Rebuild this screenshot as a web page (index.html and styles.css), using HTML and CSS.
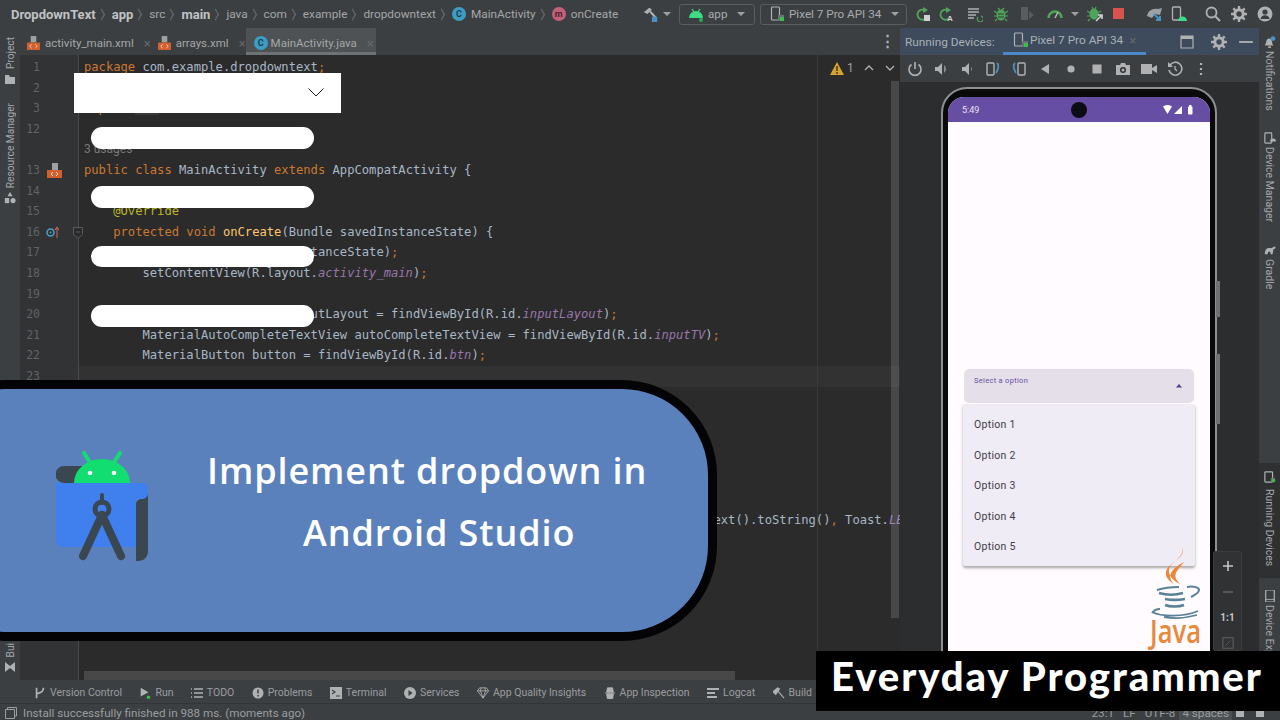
FILE: index.html
```html
<!DOCTYPE html>
<html lang="en">
<head>
  <meta charset="UTF-8" />
  <title>Implement dropdown in Android Studio</title>
  <link rel="stylesheet" href="styles.css">
</head>
<body>
  <div class="ide">
    <header class="nav-bar">
      <div class="crumbs">
        <b>DropdownText</b><i></i><b>app</b><i></i><span>src</span><i></i><b>main</b><i></i><span>java</span><i></i><span>com</span><i></i><span>example</span><i></i><span>dropdowntext</span><i></i>
        <em class="badge badge-class">C</em><span>MainActivity</span><i></i>
        <em class="badge badge-method">m</em><span>onCreate</span>
      </div>
      <div class="run-bar">
        <svg class="ico" viewBox="0 0 18 18"><path d="M1 7l6-5 3 2-5 5z" fill="#afb1b3"/><path d="M8 6l6 7" stroke="#afb1b3" stroke-width="2.4"/><rect x="10" y="12" width="6" height="6" fill="#4a90c2"/></svg>
        <span class="caret"></span>
        <div class="combo combo-app">
          <svg class="ico" viewBox="0 0 16 16"><path d="M1 12a7 7 0 0 1 14 0z" fill="#3ddc84"/><path d="M4 3l2 3M12 3l-2 3" stroke="#3ddc84" stroke-width="1.2"/><circle cx="13" cy="14" r="2" fill="#22b14c"/></svg>
          <span>app</span><span class="caret"></span>
        </div>
        <div class="combo combo-device">
          <svg class="ico" viewBox="0 0 16 16"><rect x="2.5" y="1" width="8" height="13" rx="1" fill="none" stroke="#afb1b3" stroke-width="1.2"/><rect x="9" y="9" width="6" height="6" fill="#6e7173"/><rect x="11" y="11" width="4" height="4" fill="#3bbf4a"/></svg>
          <span>Pixel 7 Pro API 34</span><span class="caret"></span>
        </div>
        <div class="run-group run-first">
          <svg class="ico" viewBox="0 0 16 16"><path d="M11 5a5 5 0 1 0-1 8" fill="none" stroke="#4fa35a" stroke-width="2"/><path d="M8 1l5 3-5 3z" fill="#4fa35a"/><rect x="9" y="9" width="6" height="6" fill="#cfd1d3"/></svg>
          <svg class="ico" viewBox="0 0 16 16"><path d="M11 5a5 5 0 1 0-1 8" fill="none" stroke="#4fa35a" stroke-width="2"/><path d="M8 1l5 3-5 3z" fill="#4fa35a"/><text x="9" y="15" class="ico-letter">A</text></svg>
        </div>
        <div class="run-group run-second">
          <svg class="ico" viewBox="0 0 16 16"><path d="M1 3h11M1 6h11M1 9h8M1 12h6" stroke="#afb1b3" stroke-width="1.6"/><path d="M11 11a3 3 0 1 0 3-1" fill="none" stroke="#4fa35a" stroke-width="1.2"/></svg>
          <svg class="ico" viewBox="0 0 16 16"><ellipse cx="8" cy="9" rx="4.5" ry="5.5" fill="#4fa35a"/><path d="M1 5l3 2M15 5l-3 2M1 10h3M15 10h-3M2 15l2-2M14 15l-2-2M5 2l2 2M11 2L9 4" stroke="#4fa35a" stroke-width="1.2"/><path d="M5 8h6M5 11h6" stroke="#2f3a30"/></svg>
          <svg class="ico" viewBox="0 0 16 16"><rect x="2" y="1" width="7" height="13" rx="1" fill="#5a5d5f"/><path d="M10 5l5 4-5 4z" fill="#5a5d5f"/></svg>
        </div>
        <div class="run-group run-third">
          <svg class="ico" viewBox="0 0 16 16"><path d="M1.5 12a6.5 6.5 0 0 1 13 0" fill="none" stroke="#4fa35a" stroke-width="2.6"/><path d="M8 12l3-6" stroke="#afb1b3" stroke-width="1.6"/></svg>
          <span class="caret"></span>
          <svg class="ico" viewBox="0 0 16 16"><ellipse cx="7" cy="8" rx="4.5" ry="5.5" fill="#4fa35a"/><path d="M0 5l3 2M14 5l-3 2M0 10h3M1 15l2-2M5 1l1 2M9 1L8 3" stroke="#4fa35a" stroke-width="1.2"/><path d="M9 15l6-6M11 9h4v4" stroke="#cfd1d3" stroke-width="1.6" fill="none"/></svg>
          <svg class="ico" viewBox="0 0 16 16"><rect x="2" y="2" width="11" height="11" fill="#d9534f"/></svg>
        </div>
        <div class="run-group run-fourth">
          <svg class="ico" viewBox="0 0 16 16"><path d="M0 10c1-5 5-8 11-7l4-1-2 7-5-1-3 4z" fill="#9ea1a3"/><path d="M7 8l6 6M9 14h4v-4" stroke="#4a90c2" stroke-width="2" fill="none"/></svg>
          <svg class="ico" viewBox="0 0 16 16"><rect x="1.5" y="1" width="8" height="13" rx="1" fill="none" stroke="#afb1b3" stroke-width="1.3"/><path d="M7 15a4.5 4.5 0 0 1 9 0z" fill="#3ddc84"/></svg>
        </div>
        <div class="run-group run-fifth">
          <svg class="ico" viewBox="0 0 16 16"><circle cx="6.5" cy="6.5" r="5" fill="none" stroke="#afb1b3" stroke-width="1.8"/><path d="M10 10l5 5" stroke="#afb1b3" stroke-width="2"/></svg>
          <svg class="ico" viewBox="0 0 16 16"><circle cx="8" cy="8" r="4.2" fill="none" stroke="#afb1b3" stroke-width="3"/><path d="M8 0v3M8 13v3M0 8h3M13 8h3M2.3 2.3l2 2M11.7 11.7l2 2M2.3 13.7l2-2M11.7 4.3l2-2" stroke="#afb1b3" stroke-width="2.4"/></svg>
          <svg class="ico" viewBox="0 0 16 16"><circle cx="8" cy="8" r="7.5" fill="#afb1b3"/><circle cx="8" cy="6" r="2.6" fill="#3c3f41"/><path d="M3.5 13a4.6 4.6 0 0 1 9 0z" fill="#3c3f41"/></svg>
        </div>
      </div>
    </header>

    <div class="workspace">
      <aside class="side-strip side-left">
        <div class="side-group">
          <div class="side-item"><span>Project</span><svg class="side-ico" viewBox="0 0 12 12"><path d="M1 2h4l1 2h5v7H1z" fill="#afb1b3"/></svg></div>
          <div class="side-item"><span>Resource Manager</span><svg class="side-ico" viewBox="0 0 14 14"><path d="M7 0l3 5H4z" fill="#afb1b3"/><rect x="1" y="7" width="5" height="6" fill="#afb1b3"/><circle cx="10.5" cy="10" r="3" fill="#afb1b3"/></svg></div>
        </div>
        <div class="side-item"><span>Bui</span><svg class="side-ico" viewBox="0 0 12 12"><path d="M1 1l5 4 5-4v10L6 7l-5 4z" fill="#afb1b3"/></svg></div>
      </aside>

      <section class="editor-col">
        <div class="tabs">
          <div class="tab">
            <svg class="file-ico" viewBox="0 0 14 15"><path d="M4 0h6v7H4z" fill="#9ea1a3"/><rect y="7" width="14" height="8" fill="#d35f2c"/><path d="M5 9l-2 2 2 2M9 9l2 2-2 2" fill="none" stroke="#f3d9cc"/></svg>
            <span>activity_main.xml</span><span class="tab-x">×</span>
          </div>
          <div class="tab">
            <svg class="file-ico" viewBox="0 0 14 15"><path d="M4 0h6v7H4z" fill="#9ea1a3"/><rect y="7" width="14" height="8" fill="#d35f2c"/><path d="M5 9l-2 2 2 2M9 9l2 2-2 2" fill="none" stroke="#f3d9cc"/></svg>
            <span>arrays.xml</span><span class="tab-x">×</span>
          </div>
          <div class="tab tab-active">
            <em class="badge badge-class">C</em>
            <span>MainActivity.java</span><span class="tab-x">×</span>
          </div>
          <div class="tabs-more">⋮</div>
        </div>
        <div class="editor">
          <div class="line"><span class="num">1</span><span class="mark"></span><code><u>package</u> com.example.dropdowntext<u>;</u></code></div>
          <div class="line"><span class="num">2</span><span class="mark"></span><code></code></div>
          <div class="line"><span class="num">3</span><span class="mark"></span><code><u>import</u> <s>...</s></code></div>
          <div class="line"><span class="num">12</span><span class="mark"></span><code></code></div>
          <div class="line"><span class="num"></span><span class="mark"></span><code class="usages">3 usages</code></div>
          <div class="line"><span class="num">13</span><span class="mark"><svg class="mark-xml" viewBox="0 0 15 15"><path d="M5 0h6v7H5z" fill="#9ea1a3"/><rect y="7" width="15" height="8" fill="#d35f2c"/><path d="M6 9l-2 2 2 2M9 9l2 2-2 2" fill="none" stroke="#f3d9cc"/></svg></span><code><u>public class</u> MainActivity <u>extends</u> AppCompatActivity {</code></div>
          <div class="line"><span class="num">14</span><span class="mark"></span><code></code></div>
          <div class="line"><span class="num">15</span><span class="mark"></span><code>    <tt>@Override</tt></code></div>
          <div class="line"><span class="num">16</span><span class="mark"><svg class="mark-override" viewBox="0 0 13 12"><circle cx="4.5" cy="6.5" r="3.5" fill="none" stroke="#4a9cc7" stroke-width="1.6"/><circle cx="4.5" cy="6.5" r="1" fill="#4a9cc7"/><path d="M11 12V2M9 4l2-3 2 3" stroke="#d9694f" fill="none"/></svg><svg class="mark-fold" viewBox="0 0 10 12"><path d="M.5.5h9v7l-4.5 4-4.5-4zM3 5h4" fill="#2b2b2b" stroke="#5a5a5a"/></svg></span><code>    <u>protected void</u> <q>onCreate</q>(Bundle savedInstanceState) {</code></div>
          <div class="line"><span class="num">17</span><span class="mark"></span><code>        <u>super</u>.onCreate(savedInstanceState)<u>;</u></code></div>
          <div class="line"><span class="num">18</span><span class="mark"></span><code>        setContentView(R.layout.<var>activity_main</var>)<u>;</u></code></div>
          <div class="line"><span class="num">19</span><span class="mark"></span><code></code></div>
          <div class="line"><span class="num">20</span><span class="mark"></span><code>        TextInputLayout textInputLayout = findViewById(R.id.<var>inputLayout</var>)<u>;</u></code></div>
          <div class="line"><span class="num">21</span><span class="mark"></span><code>        MaterialAutoCompleteTextView autoCompleteTextView = findViewById(R.id.<var>inputTV</var>)<u>;</u></code></div>
          <div class="line"><span class="num">22</span><span class="mark"></span><code>        MaterialButton button = findViewById(R.id.<var>btn</var>)<u>;</u></code></div>
          <div class="line line-current"><span class="num">23</span><span class="mark"></span><code></code></div>
          <div class="line"><span class="num"></span><span class="mark"></span><code></code></div>
          <div class="line"><span class="num"></span><span class="mark"></span><code></code></div>
          <div class="line"><span class="num"></span><span class="mark"></span><code></code></div>
          <div class="line"><span class="num"></span><span class="mark"></span><code></code></div>
          <div class="line"><span class="num"></span><span class="mark"></span><code></code></div>
          <div class="line"><span class="num"></span><span class="mark"></span><code></code></div>
          <div class="line"><span class="num"></span><span class="mark"></span><code class="toast-line">ext().toString()<u>,</u> Toast.<var>LE</var></code></div>

          <div class="margin-line"></div>
          <div class="inspection">
            <svg class="inspection-ico" viewBox="0 0 14 13"><path d="M7 0l7 13H0z" fill="#d6a32e"/><path d="M7 4v5M7 10v2" stroke="#3a2f10" stroke-width="1.4"/></svg>
            <span>1</span>
            <svg class="inspection-arrow" viewBox="0 0 10 6"><path d="M1 5l4-4 4 4" fill="none" stroke="#afb1b3" stroke-width="1.3"/></svg>
            <svg class="inspection-arrow" viewBox="0 0 10 6"><path d="M1 1l4 4 4-4" fill="none" stroke="#afb1b3" stroke-width="1.3"/></svg>
          </div>
          <div class="scroll-v"></div>
          <div class="scroll-h"></div>
        </div>
      </section>

      <section class="device-panel">
        <div class="device-head">
          <span class="device-label">Running Devices:</span>
          <div class="device-tab">
            <svg class="ico" viewBox="0 0 16 16"><rect x="1.5" y="1" width="8" height="13" rx="1" fill="none" stroke="#afb1b3" stroke-width="1.2"/><rect x="9" y="9" width="6" height="6" fill="#6e7173"/><rect x="11" y="11" width="4" height="4" fill="#3bbf4a"/></svg>
            <span>Pixel 7 Pro API 34</span><span class="tab-x">×</span>
          </div>
          <svg class="ico head-window" viewBox="0 0 14 14"><path d="M1 1h12v12H1z" fill="none" stroke="#afb1b3" stroke-width="1.2"/><rect x="1" y="1" width="12" height="3" fill="#afb1b3"/></svg>
          <svg class="ico head-gear" viewBox="0 0 16 16"><circle cx="8" cy="8" r="4.2" fill="none" stroke="#afb1b3" stroke-width="3"/><path d="M8 0v3M8 13v3M0 8h3M13 8h3M2.3 2.3l2 2M11.7 11.7l2 2M2.3 13.7l2-2M11.7 4.3l2-2" stroke="#afb1b3" stroke-width="2.4"/></svg>
          <svg class="ico head-min" viewBox="0 0 14 14"><path d="M1 7h12" stroke="#afb1b3" stroke-width="1.6"/></svg>
        </div>
        <div class="device-tools">
          <svg class="ico" viewBox="0 0 16 16"><path d="M4.5 3.5a6 6 0 1 0 7 0" fill="none" stroke="#afb1b3" stroke-width="1.6"/><path d="M8 1v7" stroke="#afb1b3" stroke-width="1.6"/></svg>
          <svg class="ico" viewBox="0 0 16 16"><path d="M2 6h3l4-4v12l-4-4H2z" fill="#afb1b3"/><path d="M11 4a5 5 0 0 1 0 8" fill="#8a8d8f"/></svg>
          <svg class="ico" viewBox="0 0 16 16"><path d="M3 6h3l4-4v12l-4-4H3z" fill="#afb1b3"/><path d="M12 6a2.5 2.5 0 0 1 0 4" fill="#8a8d8f"/></svg>
          <svg class="ico" viewBox="0 0 16 16"><rect x="2" y="2" width="7" height="12" rx="1" fill="none" stroke="#afb1b3" stroke-width="1.4"/><path d="M12 2c2 2 2 5-1 10" fill="none" stroke="#4a90c2" stroke-width="1.8"/></svg>
          <svg class="ico" viewBox="0 0 16 16"><rect x="7" y="2" width="7" height="12" rx="1" fill="none" stroke="#afb1b3" stroke-width="1.4"/><path d="M4 2C2 4 2 7 5 12" fill="none" stroke="#4a90c2" stroke-width="1.8"/></svg>
          <svg class="ico" viewBox="0 0 16 16"><path d="M12 3v10L4 8z" fill="#afb1b3"/></svg>
          <svg class="ico" viewBox="0 0 16 16"><circle cx="8" cy="8" r="3.6" fill="#afb1b3"/></svg>
          <svg class="ico" viewBox="0 0 16 16"><rect x="3.5" y="3.5" width="9" height="9" fill="#afb1b3"/></svg>
          <svg class="ico" viewBox="0 0 16 16"><path d="M1 4h4l1-2h4l1 2h4v10H1z" fill="#afb1b3"/><circle cx="8" cy="9" r="3" fill="#2e3031"/><circle cx="8" cy="9" r="1.5" fill="#afb1b3"/></svg>
          <svg class="ico" viewBox="0 0 16 16"><rect x="0" y="3" width="11" height="10" fill="#afb1b3"/><path d="M11 7l5-3v8l-5-3z" fill="#afb1b3"/></svg>
          <svg class="ico" viewBox="0 0 16 16"><path d="M3 4a6.5 6.5 0 1 1-1 5" fill="none" stroke="#afb1b3" stroke-width="1.6"/><path d="M1 1v5h5z" fill="#afb1b3"/><path d="M8 5v3l2 2" fill="none" stroke="#afb1b3" stroke-width="1.3"/></svg>
          <svg class="ico" viewBox="0 0 16 16"><path d="M8 2v2M8 7v2M8 12v2" stroke="#afb1b3" stroke-width="2.2"/></svg>
        </div>
        <div class="device-view">
          <div class="phone">
            <div class="phone-btn phone-btn-power"></div>
            <div class="phone-btn phone-btn-volume"></div>
            <div class="screen">
              <div class="status-bar">
                <span>5:49</span>
                <i class="camera"></i>
                <svg class="status-icons" viewBox="0 0 30 10"><path d="M0 1.5a8 8 0 0 1 9 0L4.5 9z" fill="#fff"/><path d="M19 1v8h-8z" fill="#fff"/><rect x="25" y="1.5" width="4.5" height="8" rx="1" fill="#fff"/><rect x="26" y="0" width="2.5" height="2" fill="#fff"/></svg>
              </div>
              <div class="screen-body">
                <div class="field">
                  <span class="field-label">Select a option</span>
                  <svg class="field-arrow" viewBox="0 0 6 4"><path d="M3 0l3 3.5H0z" fill="#4f3f86"/></svg>
                </div>
                <ul class="menu">
                  <li>Option 1</li>
                  <li>Option 2</li>
                  <li>Option 3</li>
                  <li>Option 4</li>
                  <li>Option 5</li>
                </ul>
              </div>
            </div>
          </div>
          <div class="zoom-panel">
            <svg class="zoom-ico" viewBox="0 0 12 12"><path d="M6 1v10M1 6h10" stroke="#c4c6c8" stroke-width="1.6"/></svg>
            <svg class="zoom-ico" viewBox="0 0 12 12"><path d="M1 6h10" stroke="#5f6264" stroke-width="1.6"/></svg>
            <span>1:1</span>
            <svg class="zoom-ico" viewBox="0 0 14 14"><path d="M1 1h12v12H1z" fill="none" stroke="#5f6264" stroke-width="1.2"/><path d="M4 10l6-6" stroke="#5f6264"/></svg>
          </div>
        </div>
      </section>

      <aside class="side-strip side-right">
        <div class="rail-item"><svg class="side-ico" viewBox="0 0 14 14"><path d="M1 11c2-2 1-8 5-8s3 6 5 8z" fill="#afb1b3"/><circle cx="10.5" cy="3" r="2.8" fill="#4a90c2"/><rect x="5" y="12" width="3" height="2" fill="#afb1b3"/></svg><span>Notifications</span></div>
        <div class="rail-item rail-manager"><svg class="side-ico" viewBox="0 0 14 14"><rect x="1" y="1" width="8" height="12" rx="1" fill="none" stroke="#afb1b3" stroke-width="1.4"/><path d="M7 11a3.5 3.5 0 0 1 7 0z" fill="#afb1b3"/></svg><span>Device Manager</span></div>
        <div class="rail-item rail-gradle"><svg class="side-ico" viewBox="0 0 14 14"><path d="M1 12c0-6 3-8 7-7 2 0 3-2 5-2 1 1 0 3-2 3l-1 6H8l-1-3H5l-1 3z" fill="#afb1b3"/></svg><span>Gradle</span></div>
        <div class="rail-item rail-running"><svg class="side-ico" viewBox="0 0 14 14"><rect x="1" y="1" width="9" height="12" rx="1" fill="none" stroke="#afb1b3" stroke-width="1.4"/><rect x="8" y="8" width="5" height="5" fill="#6e7173"/><circle cx="11" cy="11" r="2" fill="#3bbf4a"/></svg><span>Running Devices</span></div>
        <div class="rail-item rail-explorer"><svg class="side-ico" viewBox="0 0 14 14"><rect x="2" y="0" width="10" height="14" rx="1" fill="none" stroke="#afb1b3" stroke-width="1.4"/><path d="M2 11h10" stroke="#afb1b3"/></svg><span>Device Expl</span></div>
      </aside>
    </div>

    <div class="tool-bar">
      <div class="tool"><svg class="tool-ico" viewBox="0 0 12 14"><path d="M2 1v12M10 1c0 5-3 5-8 7" fill="none" stroke="#afb1b3" stroke-width="2"/></svg>Version Control</div>
      <div class="tool"><svg class="tool-ico" viewBox="0 0 12 14"><path d="M1 1l9 5-9 5z" fill="#afb1b3"/><circle cx="10" cy="12" r="2" fill="#3bbf4a"/></svg>Run</div>
      <div class="tool"><svg class="tool-ico" viewBox="0 0 12 12"><path d="M0 2h1M3 2h9M0 6h1M3 6h9M0 10h1M3 10h9" stroke="#afb1b3" stroke-width="1.5"/></svg>TODO</div>
      <div class="tool"><svg class="tool-ico" viewBox="0 0 12 12"><circle cx="6" cy="6" r="5.5" fill="#afb1b3"/><path d="M6 2.5v4M6 8v1.5" stroke="#3c3f41" stroke-width="1.5"/></svg>Problems</div>
      <div class="tool"><svg class="tool-ico" viewBox="0 0 12 12"><rect width="12" height="12" fill="#afb1b3"/><path d="M2 3l3 2-3 2M6 9h4" stroke="#3c3f41" fill="none" stroke-width="1.2"/></svg>Terminal</div>
      <div class="tool"><svg class="tool-ico" viewBox="0 0 12 12"><circle cx="6" cy="6" r="6" fill="#afb1b3"/><path d="M4.5 3l4 3-4 3z" fill="#3c3f41"/></svg>Services</div>
      <div class="tool"><svg class="tool-ico" viewBox="0 0 14 13"><path d="M3 .5h8L13.5 4 7 12.5.5 4zM.5 4h13M5 .5L4 4l3 8.5L10 4 9 .5" fill="none" stroke="#afb1b3"/></svg>App Quality Insights</div>
      <div class="tool"><svg class="tool-ico" viewBox="0 0 12 14"><path d="M3 1h6l1 5H2zM0 7h12M2 8h8l-1 6H3z" stroke="#afb1b3" fill="#afb1b3"/></svg>App Inspection</div>
      <div class="tool"><svg class="tool-ico" viewBox="0 0 12 10"><path d="M0 1h12M0 5h8M0 9h10" stroke="#afb1b3" stroke-width="1.8"/></svg>Logcat</div>
      <div class="tool"><svg class="tool-ico" viewBox="0 0 13 13"><path d="M0 5l5-4 2 1-4 6zM5 4l7 8" stroke="#afb1b3" fill="#afb1b3" stroke-width="1.2"/></svg>Build</div>
    </div>

    <footer class="status">
      <svg class="status-ico" viewBox="0 0 12 12"><path d="M2.5 2.5V.5h9V9h-2M.5 2.5h9v9h-9z" fill="none" stroke="#9a9da0"/></svg>
      <span>Install successfully finished in 988 ms. (moments ago)</span>
      <div class="status-right">
        <span>23:1</span><span>LF</span><span>UTF-8</span><span class="status-indent">4 spaces</span>
        <i class="status-box"></i><i class="status-box"></i>
      </div>
    </footer>
  </div>

  <!-- thumbnail overlays -->
  <div class="redact redact-box">
    <svg class="redact-chevron" viewBox="0 0 16 9"><path d="M.5.5L8 8 15.5.5" fill="none" stroke="#222"/></svg>
  </div>
  <div class="redact pill pill-1"></div>
  <div class="redact pill pill-2"></div>
  <div class="redact pill pill-3"></div>
  <div class="redact pill pill-4"></div>

  <div class="banner">
    <svg class="studio-logo" viewBox="0 0 92 110">
      <path d="M30 15H8a8.5 8.5 0 0 0 0 17h24z" fill="#3a4650"/>
      <path d="M28 2l7 11M64 2l-7 11" stroke="#12dd71" stroke-width="4" stroke-linecap="round"/>
      <path d="M18 32a28 24 0 0 1 56 0z" fill="#12dd71"/>
      <circle cx="34" cy="22" r="2.3" fill="#fff"/><circle cx="58" cy="22" r="2.3" fill="#fff"/>
      <path d="M0 32h87a5 5 0 0 1 5 5v6c0 3-3 5-7 5h-5v48H7a7 7 0 0 1-7-7z" fill="#3f7fee"/>
      <path d="M80 110V53c0-3 3-5 6-5 3 0 6-2 6-6v58c0 6-4 10-10 10z" fill="#3a4650"/>
      <path d="M46 44v8" stroke="#3a4650" stroke-width="4" stroke-linecap="round"/>
      <circle cx="46" cy="58" r="7" fill="none" stroke="#3a4650" stroke-width="5"/>
      <path d="M46 64L27 105M46 64l19 41" stroke="#3a4650" stroke-width="8" stroke-linecap="round"/>
    </svg>
    <div class="banner-title">
      <div class="banner-line-1">Implement dropdown in</div>
      <div class="banner-line-2">Android Studio</div>
    </div>
  </div>

  <svg class="java-logo" viewBox="0 0 54 102">
    <path d="M33 0c3 7-4 11-9 16-5 5-5 9-2 14 2 3 5 5 9 7-3-3-6-7-4-11 1-3 6-8 8-11-6 3-11 7-13 11-2 4 0 8 3 11-5-3-9-7-8-12 1-6 9-10 14-15 3-3 4-6 2-10z" fill="#e8883a"/>
    <path d="M8 43c6-2 14-3 22-3M38 40c6-1 12 0 12 3 0 3-4 5-8 7" fill="none" stroke="#5b8198" stroke-width="2"/>
    <path d="M10 46c7 2 17 2 24 0M16 52c5 1 14 1 20 0M16 58c5 2 14 2 19 0" fill="none" stroke="#5b8198" stroke-width="2.6"/>
    <path d="M3 66c2-3 4-4 8-4M3 65c10 5 32 5 46-1M15 70c10 2 22 1 33-2" fill="none" stroke="#5b8198" stroke-width="1.8"/>
    <text x="1" y="96" class="java-word" textLength="51" lengthAdjust="spacingAndGlyphs">Java</text>
  </svg>

  <div class="channel">Everyday Programmer</div>
</body>
</html>
```

FILE: styles.css
```css
:root {
  --chrome: #3c3f41;
  --editor: #2b2b2b;
  --gutter: #313335;
  --ui-text: #a4a7a9;
  --code-text: #a9b7c6;
  --keyword: #cc7832;
}

* {
  margin: 0;
  padding: 0;
  box-sizing: border-box;
}

body {
  width: 1280px;
  height: 720px;
  overflow: hidden;
  position: relative;
  background: var(--chrome);
  color: var(--ui-text);
  font-family: Roboto, "Liberation Sans", sans-serif;
  font-size: 12px;
}

.ide {
  display: flex;
  flex-direction: column;
  height: 720px;
}

.ico {
  width: 16px;
  height: 16px;
  flex: none;
}

.ico-letter {
  font-family: "Liberation Sans", sans-serif;
  font-size: 8px;
  font-weight: bold;
  fill: #cfd1d3;
}

/* top bar */
.nav-bar {
  height: 28px;
  flex: none;
  display: flex;
  align-items: center;
  padding: 0 7px 0 11px;
  background: var(--chrome);
}

.crumbs {
  display: flex;
  align-items: center;
  font-size: 11.8px;
  color: #a4a7a9;
  white-space: nowrap;
}

.crumbs b {
  font-size: 13px;
  color: #c0c3c5;
}

.crumbs i {
  width: 5px;
  height: 5px;
  margin: 0 8px 0 3px;
  border-top: 1px solid #63676a;
  border-right: 1px solid #63676a;
  transform: scaleY(1.8) rotate(45deg);
}

.badge {
  width: 14px;
  height: 14px;
  flex: none;
  border-radius: 50%;
  display: flex;
  align-items: center;
  justify-content: center;
  margin-right: 5px;
  font-style: normal;
  font-size: 9px;
  font-weight: bold;
  color: #1d3b4a;
}

.badge-class {
  background: #3e9dc4;
}

.badge-method {
  background: #c3607a;
  color: #4a1f2c;
}

.run-bar {
  margin-left: auto;
  display: flex;
  align-items: center;
}

.caret {
  width: 0;
  height: 0;
  flex: none;
  margin: 0 8px 0 4px;
  border-left: 4px solid transparent;
  border-right: 4px solid transparent;
  border-top: 4px solid #9ea1a3;
}

.combo {
  height: 21px;
  display: flex;
  align-items: center;
  gap: 4px;
  padding: 0 3px 0 8px;
  border: 1px solid #5a5d5f;
  border-radius: 3px;
  color: #a9acae;
  font-size: 11.7px;
  white-space: nowrap;
}

.combo .caret {
  margin: 0 6px;
}

.combo-app {
  width: 76px;
  margin-right: 5px;
}

.combo-device {
  width: 147px;
  justify-content: space-between;
}

.run-group {
  display: flex;
  align-items: center;
  gap: 10px;
}

.run-first {
  gap: 7px;
  margin-left: 8px;
}

.run-second {
  margin-left: 13px;
}

.run-third {
  gap: 8px;
  margin-left: 12px;
}

.run-third .caret {
  margin: 0;
}

.run-fourth {
  gap: 8px;
  margin-left: 20px;
}

.run-fifth {
  margin-left: 18px;
}

/* main area */
.workspace {
  flex: 1;
  min-height: 0;
  display: flex;
}

.side-strip {
  flex: none;
  display: flex;
  flex-direction: column;
  background: var(--chrome);
  font-size: 10.5px;
  overflow: hidden;
}

.side-left {
  width: 20px;
  justify-content: space-between;
  align-items: center;
  padding: 9px 0 7px;
  font-size: 10.2px;
}

.side-group {
  display: flex;
  flex-direction: column;
  gap: 18px;
}

.side-item {
  display: flex;
  flex-direction: column;
  align-items: center;
  gap: 4px;
}

.side-item span {
  writing-mode: vertical-rl;
  transform: rotate(180deg);
}

.side-ico {
  width: 12px;
  height: 12px;
  flex: none;
}

.side-right {
  width: 21px;
  align-items: stretch;
  padding-top: 8px;
}

.rail-item {
  display: flex;
  flex-direction: column;
  align-items: center;
  gap: 3px;
}

.rail-item span {
  writing-mode: vertical-rl;
}

.rail-manager {
  margin-top: 21px;
}

.rail-gradle {
  margin-top: 22px;
}

.rail-running {
  margin-top: 174px;
  padding: 8px 0 12px;
  gap: 6px;
  background: #2e3031;
}

.rail-explorer {
  margin-top: 12px;
}

/* editor */
.editor-col {
  width: 880px;
  flex: none;
  display: flex;
  flex-direction: column;
}

.tabs {
  height: 27px;
  flex: none;
  display: flex;
  font-size: 11.5px;
  background: var(--chrome);
}

.tab {
  display: flex;
  align-items: center;
  gap: 5px;
  padding: 3px 0 0 7px;
  color: #a4a7a9;
}

.file-ico {
  width: 13px;
  height: 14px;
}

.tab-x {
  margin-left: 5px;
  color: #65686a;
  font-size: 13px;
}

.tab-active {
  padding: 6px 2px 0 8px;
  background: #4e5254;
  border-bottom: 3px solid #6e7275;
}

.tab-active .badge {
  margin-right: -2px;
}

.tabs-more {
  margin-left: auto;
  width: 26px;
  line-height: 26px;
  text-align: center;
  font-size: 15px;
  font-weight: bold;
  color: #afb1b3;
}

.editor {
  flex: 1;
  min-height: 0;
  position: relative;
  overflow: hidden;
  padding-top: 2px;
  background: linear-gradient(to right, var(--gutter) 58px, #484a4c 58px 59px, var(--editor) 59px);
  font-family: "DejaVu Sans Mono", "Liberation Mono", monospace;
  font-size: 12.15px;
}

.line {
  height: 20.6px;
  line-height: 20.6px;
  display: flex;
}

.num {
  width: 20px;
  flex: none;
  text-align: right;
  color: #606366;
  font-size: 11.5px;
}

.mark {
  width: 39px;
  flex: none;
  position: relative;
}

.mark-xml {
  position: absolute;
  left: 7px;
  top: 3px;
  width: 15px;
  height: 15px;
}

.mark-override {
  position: absolute;
  left: 6px;
  top: 4px;
  width: 13px;
  height: 12px;
}

.mark-fold {
  position: absolute;
  left: 33px;
  top: 5px;
  width: 10px;
  height: 12px;
}

.line code {
  flex: 1;
  padding-left: 5px;
  white-space: pre;
  font-family: inherit;
  color: var(--code-text);
}

.line-current code {
  background: #323232;
}

.line .usages {
  font-family: Roboto, "Liberation Sans", sans-serif;
  font-size: 12px;
  color: #787878;
}

.line .toast-line {
  padding-left: 634.5px;
}

.line u {
  text-decoration: none;
  color: var(--keyword);
}

.line s {
  text-decoration: none;
  padding: 0 1px;
  background: #3a3a3a;
  color: #808080;
}

.line tt {
  font-family: inherit;
  color: #bbb529;
}

.line q {
  quotes: none;
  color: #ffc66d;
}

.line var {
  color: #9876aa;
}

.margin-line {
  position: absolute;
  left: 797px;
  top: 0;
  bottom: 0;
  width: 1px;
  background: #3a3a3a;
}

.inspection {
  position: absolute;
  left: 810px;
  top: 6px;
  display: flex;
  align-items: center;
  font-family: Roboto, sans-serif;
  font-size: 12px;
  color: #9ea1a3;
}

.inspection-ico {
  width: 14px;
  height: 13px;
  margin-right: 3px;
}

.inspection-arrow {
  width: 10px;
  height: 6px;
  margin-left: 10px;
}

.inspection-arrow + .inspection-arrow {
  margin-left: 11px;
}

.scroll-v {
  position: absolute;
  right: 1px;
  top: 26px;
  width: 8px;
  height: 537px;
  background: rgba(255,255,255,0.14);
}

.scroll-h {
  position: absolute;
  left: 64px;
  bottom: 0;
  width: 651px;
  height: 9px;
  background: rgba(255,255,255,0.14);
}

/* running devices */
.device-panel {
  width: 359px;
  flex: none;
  display: flex;
  flex-direction: column;
}

.device-head {
  height: 27px;
  flex: none;
  display: flex;
  align-items: center;
  padding-left: 5px;
  background: #3d4b5c;
  font-size: 11.8px;
  color: #a9b0b6;
  white-space: nowrap;
}

.device-label {
  width: 98px;
}

.device-tab {
  height: 27px;
  width: 143px;
  display: flex;
  align-items: center;
  gap: 1px;
  padding-left: 10px;
  border-bottom: 3px solid #4a88c7;
}

.head-window {
  margin-left: 34px;
  width: 14px;
  height: 14px;
}

.head-gear {
  margin-left: 17px;
}

.head-min {
  margin-left: 11px;
}

.device-tools {
  height: 27px;
  flex: none;
  display: flex;
  align-items: center;
  gap: 10px;
  padding-left: 7px;
  background: var(--chrome);
}

.device-view {
  flex: 1;
  min-height: 0;
  position: relative;
  overflow: hidden;
  padding: 5px 0 0 41px;
  background: #2c2d2e;
}

.phone {
  width: 276px;
  height: 620px;
  position: relative;
  padding: 8px 5px 0;
  border: 2px solid #8d8f91;
  border-radius: 26px 26px 0 0;
  background: #0a0a0a;
}

.phone-btn {
  position: absolute;
  left: 273px;
  width: 4px;
  background: #6f7173;
}

.phone-btn-power {
  top: 192px;
  height: 36px;
}

.phone-btn-volume {
  top: 265px;
  height: 70px;
}

.screen {
  width: 262px;
  height: 100%;
  display: flex;
  flex-direction: column;
  border-radius: 16px 16px 0 0;
  overflow: hidden;
  background: #fffbfe;
}

.status-bar {
  height: 25px;
  flex: none;
  position: relative;
  display: flex;
  align-items: center;
  justify-content: space-between;
  padding: 0 17px 0 14px;
  background: #654ea3;
  color: #e8e2f4;
  font-size: 9px;
}

.camera {
  position: absolute;
  left: 123px;
  top: 5px;
  width: 16px;
  height: 16px;
  border-radius: 50%;
  background: #0c0c14;
}

.status-icons {
  width: 30px;
  height: 10px;
}

.screen-body {
  flex: 1;
  padding-top: 247px;
}

.field {
  height: 34px;
  margin: 0 16px;
  position: relative;
  padding: 7px 10px;
  border-radius: 5px;
  background: #e5dfea;
}

.field-label {
  display: block;
  font-size: 7.5px;
  letter-spacing: .3px;
  color: #6750a4;
}

.field-arrow {
  position: absolute;
  right: 12px;
  top: 15px;
  width: 6px;
  height: 4px;
}

.menu {
  list-style: none;
  margin: 1px 15px 0;
  padding: 6px 0 3px;
  border-radius: 2px;
  background: #f0ecf6;
  box-shadow: 0 2px 3px rgba(0,0,0,0.35);
}

.menu li {
  height: 30.6px;
  line-height: 30.6px;
  padding-left: 11px;
  font-size: 10.5px;
  letter-spacing: .3px;
  color: #3f3d44;
}

.zoom-panel {
  position: absolute;
  left: 313px;
  top: 469px;
  width: 29px;
  height: 100px;
  display: flex;
  flex-direction: column;
  align-items: center;
  gap: 14px;
  padding-top: 8px;
  border: 1px solid #3a3c3e;
  border-radius: 2px;
  background: #303234;
  color: #c4c6c8;
  font-size: 10px;
  font-weight: bold;
}

.zoom-ico {
  width: 12px;
  height: 12px;
  flex: none;
}

/* bottom bars */
.tool-bar {
  height: 23px;
  flex: none;
  display: flex;
  align-items: center;
  gap: 17.4px;
  padding: 2px 0 0 34px;
  background: var(--chrome);
  font-size: 10.5px;
  color: #9a9da0;
  white-space: nowrap;
}

.tool {
  display: flex;
  align-items: center;
  gap: 4px;
}

.tool-ico {
  width: 12px;
  height: 12px;
  flex: none;
}

.status {
  height: 17px;
  flex: none;
  display: flex;
  align-items: center;
  padding: 2px 0 0 5px;
  border-top: 1px solid #323437;
  background: var(--chrome);
  font-size: 11.65px;
  color: #9a9da0;
}

.status-ico {
  width: 12px;
  height: 12px;
  margin-right: 6px;
}

.status-right {
  margin-left: auto;
  display: flex;
  align-items: center;
  gap: 9px;
  padding-right: 16px;
}

.status-indent {
  margin-left: -5px;
  padding: 0 3px;
  background: #4b5052;
}

.status-box {
  width: 8px;
  height: 7px;
  margin-left: -5px;
  background: #afb1b3;
}

.status-box + .status-box {
  margin-left: 3px;
}

/* thumbnail overlays */
.redact {
  position: absolute;
  background: #fff;
}

.redact-box {
  left: 74px;
  top: 73px;
  width: 267px;
  height: 40px;
}

.redact-chevron {
  position: absolute;
  left: 234px;
  top: 15px;
  width: 16px;
  height: 9px;
}

.pill {
  left: 91px;
  width: 223px;
  height: 21.5px;
  border-radius: 11px;
}

.pill-1 {
  top: 127px;
}

.pill-2 {
  top: 186px;
}

.pill-3 {
  top: 245.5px;
}

.pill-4 {
  top: 305px;
}

.banner {
  position: absolute;
  left: -90px;
  top: 380px;
  width: 807px;
  height: 261px;
  border: 9px solid #040406;
  border-radius: 95px;
  background: #5a81bb;
}

.studio-logo {
  position: absolute;
  left: 137px;
  top: 62px;
  width: 92px;
  height: 110px;
}

.banner-title {
  position: absolute;
  left: 288px;
  top: 55px;
  font-family: "Open Sans", Lato, sans-serif;
  font-size: 36px;
  font-weight: 600;
  letter-spacing: .9px;
  color: #fff;
  white-space: nowrap;
}

.banner-line-1 {
  height: 62px;
  line-height: 54px;
}

.banner-line-2 {
  margin-left: 96px;
  line-height: 54px;
}

.java-logo {
  position: absolute;
  left: 1149px;
  top: 547px;
  width: 54px;
  height: 102px;
  overflow: visible;
}

.java-word {
  font-family: "Open Sans", sans-serif;
  font-size: 32px;
  font-weight: 600;
  fill: #e8883a;
}

.channel {
  position: absolute;
  left: 816px;
  top: 651px;
  width: 464px;
  height: 60px;
  padding-left: 15px;
  background: #000;
  color: #fff;
  font-family: Lato, sans-serif;
  font-size: 40px;
  font-weight: 900;
  letter-spacing: 1.9px;
  line-height: 50px;
  white-space: nowrap;
}
```
